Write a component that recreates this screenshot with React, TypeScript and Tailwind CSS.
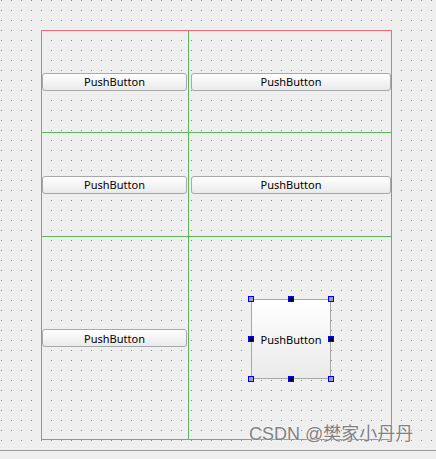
import React from 'react';

const PushButton: React.FC<{ className?: string }> = ({ className = '' }) => (
  <button
    className={`flex items-center justify-center rounded-[3px] border border-[#a8a8a8] bg-gradient-to-b from-white to-[#eaeaea] text-[11px] leading-none text-black ${className}`}
    style={{ fontFamily: '"Noto Sans", "DejaVu Sans", sans-serif' }}
  >
    PushButton
  </button>
);

const Handle: React.FC<{ pos: string; dark?: boolean }> = ({ pos, dark }) => (
  <span
    className={`absolute h-[6px] w-[6px] border border-[#0000ff] ${dark ? 'bg-black' : 'bg-[#a0a0a0]'} ${pos}`}
  />
);

const App: React.FC = () => {
  return (
    <div className="relative h-[459px] w-[436px] overflow-hidden bg-[#efefef]">
      {/* designer dot grid */}
      <svg className="absolute left-0 top-0" width="436" height="450">
        <defs>
          <pattern id="dots" width="10" height="10" patternUnits="userSpaceOnUse">
            <rect x="1" y="0" width="1" height="1" fill="#8e8e8e" />
          </pattern>
        </defs>
        <rect width="436" height="450" fill="url(#dots)" />
      </svg>

      <div className="relative flex h-[451px] flex-col border-b border-[#9a9a9a]">
        <div className="ml-[41px] mt-[30px] grid w-[351px] grid-cols-[147px_202px] border border-[#ee6e6e]">
          {/* row 1 */}
          <div className="flex h-[102px] items-center border-b border-r border-[#5fb55f]">
            <PushButton className="h-[18px] w-[145px]" />
          </div>
          <div className="flex h-[102px] items-center border-b border-[#5fb55f]">
            <PushButton className="ml-[2px] h-[18px] w-[200px]" />
          </div>
          {/* row 2 */}
          <div className="flex h-[104px] items-center border-b border-r border-[#5fb55f]">
            <PushButton className="h-[18px] w-[145px]" />
          </div>
          <div className="flex h-[104px] items-center border-b border-[#5fb55f]">
            <PushButton className="ml-[2px] h-[18px] w-[200px]" />
          </div>
          {/* row 3 */}
          <div className="flex h-[202px] items-center border-r border-[#5fb55f]">
            <PushButton className="h-[18px] w-[145px]" />
          </div>
          <div className="flex h-[202px] items-center">
            <div className="relative ml-[62px] mt-[2px]">
              <PushButton className="h-[80px] w-[80px]" />
              <Handle pos="-left-[3px] -top-[3px]" />
              <Handle pos="left-[37px] -top-[3px]" dark />
              <Handle pos="-right-[3px] -top-[3px]" />
              <Handle pos="-left-[3px] top-[37px]" dark />
              <Handle pos="-right-[3px] top-[37px]" dark />
              <Handle pos="-left-[3px] -bottom-[3px]" />
              <Handle pos="left-[37px] -bottom-[3px]" dark />
              <Handle pos="-right-[3px] -bottom-[3px]" />
            </div>
          </div>
        </div>
      </div>

      {/* watermark */}
      <div
        className="absolute left-[249px] top-[425px] whitespace-nowrap text-[18px] leading-none text-[#808080] [text-shadow:0_0_2px_#ffffff,0_0_1px_#ffffff]"
        style={{ fontFamily: '"Liberation Sans", "Noto Sans CJK SC", sans-serif' }}
      >
        CSDN @樊家小丹丹
      </div>
    </div>
  );
};

export default App;
